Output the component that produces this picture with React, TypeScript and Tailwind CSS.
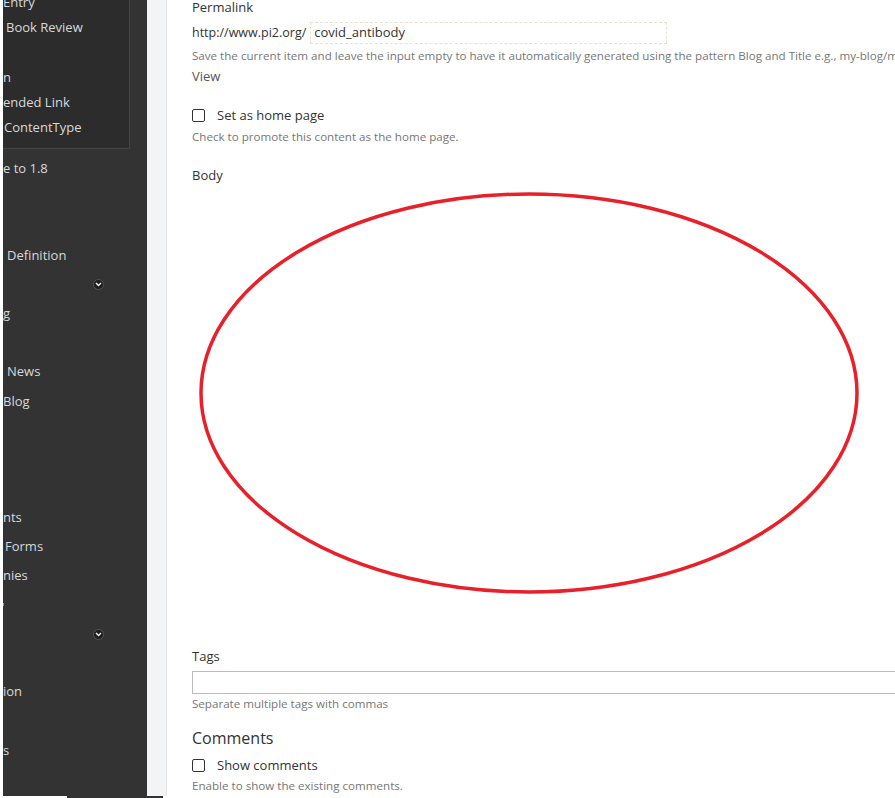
import React from "react";

const font = { fontFamily: '"Open Sans", "Noto Sans", sans-serif' };

type Row = { text?: string; pl?: string; chevron?: boolean; mark?: boolean };

const subItems: Row[] = [
  { text: "Entry", pl: "pl-[0px]" },
  { text: "Book Review", pl: "pl-[3px]" },
  {},
  { text: "n", pl: "pl-[0px]" },
  { text: "ended Link", pl: "pl-[0px]" },
  { text: "ContentType", pl: "pl-[1px]" },
];

const mainItems: Row[] = [
  { text: "e to 1.8", pl: "pl-[0px]" },
  {},
  {},
  { text: "Definition", pl: "pl-[4px]" },
  { chevron: true },
  { text: "g", pl: "pl-[0px]" },
  {},
  { text: "News", pl: "pl-[4px]" },
  { text: "Blog", pl: "pl-[0px]" },
  {},
  {},
  {},
  { text: "nts", pl: "pl-[0px]" },
  { text: "Forms", pl: "pl-[2px]" },
  { text: "nies", pl: "pl-[0px]" },
  { mark: true },
  { chevron: true },
  {},
  { text: "ion", pl: "pl-[0px]" },
  {},
  { text: "s", pl: "pl-[0px]" },
  {},
];

function Chevron() {
  return (
    <div className="ml-[90px] flex h-[11px] w-[11px] items-center justify-center rounded-full border border-[#555] bg-[#1e1e1e]">
      <svg width="7" height="5" viewBox="0 0 7 5">
        <path d="M1 1 L3.5 3.5 L6 1" fill="none" stroke="#fff" strokeWidth="1.4" />
      </svg>
    </div>
  );
}

function Sidebar() {
  return (
    <div className="relative h-[796px] w-[144px] shrink-0 overflow-hidden bg-[#333333] text-[13px] text-[#d6d9dc]">
      <div className="-mt-[10px] w-[127px] border-r border-b border-[#444] bg-[#2c2c2c] pb-[8px]">
        {subItems.map((r, i) => (
          <div key={i} className={`flex h-[25px] items-center whitespace-nowrap ${r.pl ?? ""}`}>
            {r.text}
          </div>
        ))}
      </div>
      <div className="mt-[5px]">
        {mainItems.map((r, i) => (
          <div key={i} className={`flex h-[29.1px] items-center whitespace-nowrap ${r.pl ?? ""}`}>
            {r.chevron ? <Chevron /> : r.mark ? <span className="h-[3px] w-[1px] bg-[#c98a2a]" /> : r.text}
          </div>
        ))}
      </div>
    </div>
  );
}

function Checkbox() {
  return <span className="inline-block h-[13px] w-[13px] shrink-0 rounded-[2px] border border-[#333] bg-white" />;
}

export default function App() {
  return (
    <div className="flex h-[798px] w-[895px] flex-col overflow-hidden bg-white" style={font}>
      <div className="flex h-[796px]">
        <div className="w-[3px] shrink-0 bg-white" />
        <Sidebar />
        <div className="w-[20px] shrink-0 border-r border-[#e4e4e4] bg-[#f3f4f5]" />
        <div className="min-w-0 flex-1 overflow-hidden pl-[25px] text-[13px] text-[#333]">
          <div className="-mt-[2px] h-[18px] leading-[18px]">Permalink</div>
          <div className="mt-[6px] flex h-[22px] items-center whitespace-nowrap">
            <span className="text-[12.5px]">http://www.pi2.org/</span>
            <div className="ml-[4px] flex h-[22px] w-[357px] items-center border border-dashed border-[#e3e3cf] pl-[3px]">
              covid_antibody
            </div>
          </div>
          <div className="mt-[4px] whitespace-nowrap text-[11.6px] leading-[16px] text-[#777]">
            Save the current item and leave the input empty to have it automatically generated using the pattern Blog and Title e.g., my-blog/my-blog-post
          </div>
          <div className="mt-[3px] leading-[18px] text-[#555]">View</div>

          <div className="mt-[21px] flex items-center gap-[12px]">
            <Checkbox />
            <span className="leading-[18px]">Set as home page</span>
          </div>
          <div className="mt-[5px] text-[11.6px] leading-[16px] text-[#777]">Check to promote this content as the home page.</div>

          <div className="mt-[21px] leading-[18px]">Body</div>
          <div className="relative h-[463px]">
            <svg className="absolute left-[6px] top-[8px]" width="662" height="402" viewBox="0 0 662 402">
              <ellipse cx="331" cy="201" rx="328" ry="199" fill="none" stroke="#e8202a" strokeWidth="3.5" />
            </svg>
          </div>

          <div className="leading-[18px]">Tags</div>
          <div className="mt-[6px] h-[23px] w-[720px] border border-[#bbb]" />
          <div className="mt-[2px] text-[11.6px] leading-[16px] text-[#777]">Separate multiple tags with commas</div>
          <div className="mt-[15px] text-[16px] leading-[22px]">Comments</div>
          <div className="mt-[7px] flex items-center gap-[12px]">
            <Checkbox />
            <span className="leading-[18px]">Show comments</span>
          </div>
          <div className="mt-[4px] text-[11.6px] leading-[16px] text-[#777]">Enable to show the existing comments.</div>
        </div>
      </div>
      <div className="flex h-[2px]">
        <div className="w-[67px] bg-white" />
        <div className="w-[96px] bg-[#333]" />
      </div>
    </div>
  );
}
